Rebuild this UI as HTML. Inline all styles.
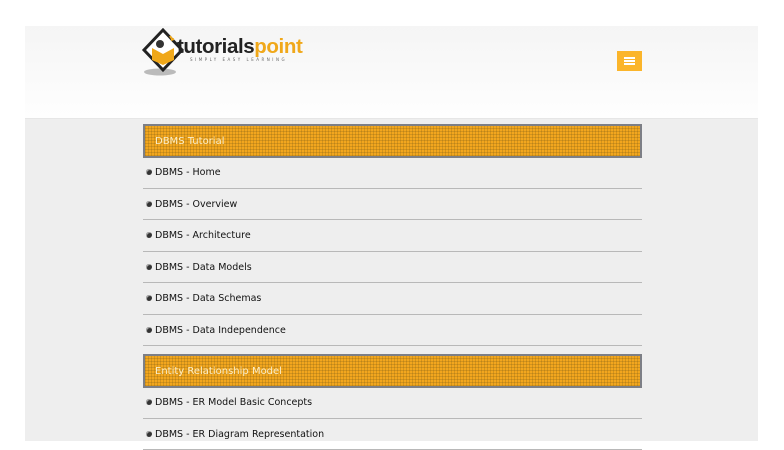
<!DOCTYPE html>
<html><head><meta charset="utf-8"><style>
*{margin:0;padding:0;box-sizing:border-box}
html,body{width:784px;height:441px;overflow:hidden;background:#fff;font-family:"DejaVu Sans","Liberation Sans",sans-serif}
#hdr{position:absolute;left:25px;top:26px;width:733px;height:92px;background:linear-gradient(#f5f5f5,#fefefe)}
#main{position:absolute;left:25px;top:118px;width:733px;height:323px;background:#eeeeee;border-top:1px solid #e6e6e6}
.btn{position:absolute;left:617px;top:51px;width:25px;height:20px;background:#fbb52b}
.btn i{position:absolute;left:7px;width:11px;height:2px;background:#fff}
.bar{position:absolute;left:143px;width:499px;height:34px;border:2px solid #7d7f86;
background-color:#f2a61e;
background-image:repeating-linear-gradient(90deg,rgba(120,90,20,.25) 0 1px,transparent 1px 3px),repeating-linear-gradient(0deg,rgba(120,90,20,.25) 0 1px,transparent 1px 3px);
color:#fbeec8;font-size:10px;padding:10px 0 0 10px}
.it{position:absolute;left:143px;width:499px;height:31.5px;border-bottom:1px solid #b8b8b8;font-size:9.5px;color:#111;padding:10px 0 0 12px}
.it:before{content:"";position:absolute;left:3px;top:12px;width:6px;height:6px;border-radius:50%;background:#333;box-shadow:inset 1px 1px 0 #aaa}
.logo{position:absolute;left:140px;top:28px}
.lt{position:absolute;left:177px;top:35px;font-family:"Liberation Sans",sans-serif;font-weight:bold;font-size:20.5px;letter-spacing:-0.4px;color:#222}
.lt span{color:#f0a81a}
.tag{position:absolute;left:190px;top:57px;font-size:4px;letter-spacing:2.5px;color:#666}
</style></head><body>
<div id="hdr"></div>
<svg class="logo" width="46" height="50" viewBox="0 0 46 50">
<ellipse cx="20" cy="44" rx="16" ry="3.5" fill="#bbb"/>
<polygon points="23,2 42,22 23,42 4,22" fill="#fff" stroke="#222" stroke-width="3"/>
<path d="M12 20 L23 26 L34 20 L34 32 L23 37 L12 32Z" fill="#f0a81a"/>
<circle cx="20" cy="16" r="4" fill="#333"/>
<path d="M30 8 l2 3 M34 11 l-3 1" stroke="#f0a81a" stroke-width="2"/>
</svg>
<div class="lt">tutorials<span>point</span></div>
<div class="tag">SIMPLY EASY LEARNING</div>
<div class="btn"><i style="top:6px"></i><i style="top:9px"></i><i style="top:12px"></i></div>
<div id="main"></div>
<div class="bar" style="top:124px">DBMS Tutorial</div>
<div class="it" style="top:157px">DBMS - Home</div>
<div class="it" style="top:188.5px">DBMS - Overview</div>
<div class="it" style="top:220px">DBMS - Architecture</div>
<div class="it" style="top:251.5px">DBMS - Data Models</div>
<div class="it" style="top:283px">DBMS - Data Schemas</div>
<div class="it" style="top:314.5px">DBMS - Data Independence</div>
<div class="bar" style="top:354px">Entity Relationship Model</div>
<div class="it" style="top:387px">DBMS - ER Model Basic Concepts</div>
<div class="it" style="top:418.5px">DBMS - ER Diagram Representation</div>
</body></html>
